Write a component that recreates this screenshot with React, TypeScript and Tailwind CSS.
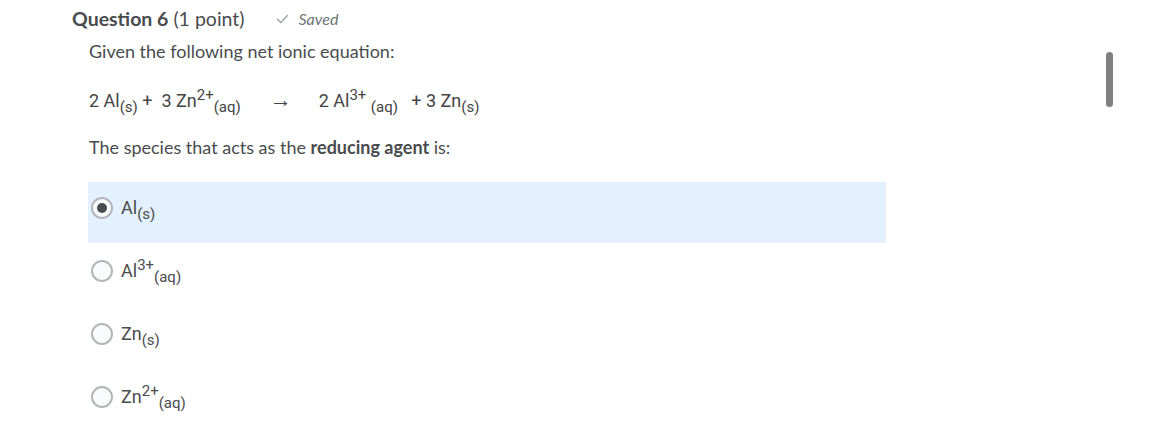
import { ReactNode } from 'react';

const eq = "font-['Roboto','Liberation_Sans',sans-serif]";

function Radio({ checked }: { checked?: boolean }) {
  return (
    <span className="flex-shrink-0 w-[22px] h-[22px] rounded-full border-2 border-[#b3b6b9] bg-[#f9fbfd] flex items-center justify-center">
      {checked && <span className="w-[10px] h-[10px] rounded-full bg-[#494c4e]" />}
    </span>
  );
}

function Option({ checked, children }: { checked?: boolean; children: ReactNode }) {
  return (
    <div className={`h-[61px] flex items-start pt-[15px] gap-[8px] pl-[3px] ${checked ? 'bg-[#e3f0fd]' : ''}`}>
      <Radio checked={checked} />
      <span className={`text-[18px] leading-[21px] text-[#494c4e] whitespace-pre ${eq}`}>{children}</span>
    </div>
  );
}

const Sub = ({ children }: { children: ReactNode }) => (
  <span className="relative top-[5px] text-[15px]">{children}</span>
);
const Sup = ({ children }: { children: ReactNode }) => (
  <span className="relative top-[-7px] text-[15px]">{children}</span>
);

export default function App() {
  return (
    <div className="relative w-[1152px] h-[445px] bg-white font-['Lato','Open_Sans',sans-serif] text-[#494c4e]">
      {/* Header */}
      <div className="pl-[72px] pt-[7px] flex items-center">
        <h2 className="text-[19.5px] leading-[22px]">
          <span className="font-bold">Question 6</span> (1 point)
        </h2>
        <span className="ml-[31px] text-[16px] italic text-[#6e7376] flex items-center gap-[10px]">
          <svg width="13" height="10" viewBox="0 0 13 10" fill="none" className="text-[#9ea2a5]">
            <path d="M1.5 5.2 L4.8 8.4 L11.5 1.5" stroke="currentColor" strokeWidth="1.4" strokeLinecap="round" strokeLinejoin="round" />
          </svg>
          Saved
        </span>
      </div>

      {/* Body */}
      <div className="pl-[88px] w-[886px]">
        <p className="mt-[9px] pl-[1px] text-[18px] leading-[22px]">Given the following net ionic equation:</p>

        <p className={`mt-[27px] pl-[1px] h-[22px] text-[18px] leading-[22px] text-[#444] whitespace-pre ${eq}`}>
          2 Al<Sub>(s)</Sub> +  3 Zn<Sup>2+</Sup><Sub>(aq)</Sub>
          <span className="inline-block w-[29px]" />
          <span className="text-[22px] leading-[22px]">→</span>
          <span className="inline-block w-[27px]" />
          2 Al<Sup>3+</Sup> <Sub>(aq)</Sub>   + 3 Zn<Sub>(s)</Sub>
        </p>

        <p className="mt-[25px] pl-[1px] text-[18px] leading-[22px]">
          The species that acts as the <span className="font-bold">reducing agent</span> is:
        </p>

        <div className="mt-[24px] flex flex-col gap-[2px]">
          <Option checked>
            Al<Sub>(s)</Sub>
          </Option>
          <Option>
            Al<Sup>3+</Sup><Sub>(aq)</Sub>
          </Option>
          <Option>
            Zn<Sub>(s)</Sub>
          </Option>
          <Option>
            Zn<Sup>2+</Sup><Sub>(aq)</Sub>
          </Option>
        </div>
      </div>

      {/* Scrollbar thumb */}
      <div className="absolute left-[1106px] top-[52px] w-[7px] h-[55px] rounded-full bg-[#808080]" />
    </div>
  );
}
